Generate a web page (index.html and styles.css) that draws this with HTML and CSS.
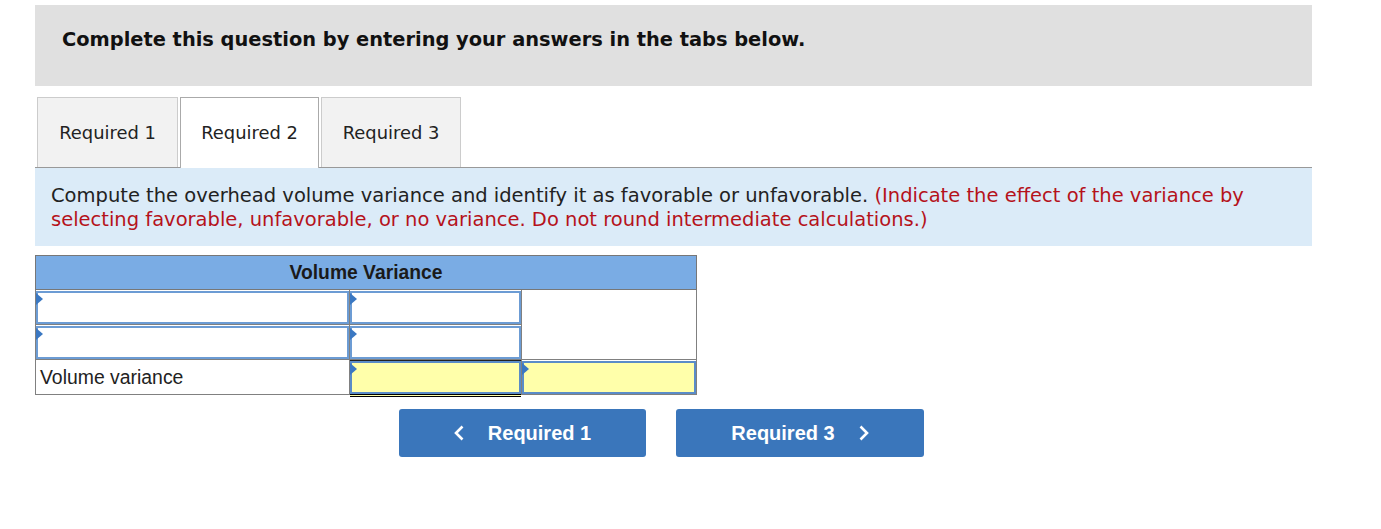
FILE: index.html
```html
<!DOCTYPE html>
<html>
<head>
<meta charset="utf-8">
<link rel="stylesheet" href="styles.css">
</head>
<body>
<div class="page">
  <div class="banner">Complete this question by entering your answers in the tabs below.</div>
  <div class="tabs">
    <div class="tab t1">Required 1</div>
    <div class="tab t2 active">Required 2</div>
    <div class="tab t3">Required 3</div>
  </div>
  <div class="instructions">
    Compute the overhead volume variance and identify it as favorable or unfavorable. <span class="red">(Indicate the effect of the variance by selecting favorable, unfavorable, or no variance. Do not round intermediate calculations.)</span>
  </div>
  <table class="grid">
    <colgroup><col class="c1"><col class="c2"><col class="c3"></colgroup>
    <tr class="hrow"><th colspan="3">Volume Variance</th></tr>
    <tr class="row">
      <td class="in"><div class="field"></div></td>
      <td class="in"><div class="field"></div></td>
      <td rowspan="2" class="blank"></td>
    </tr>
    <tr class="row">
      <td class="in"><div class="field"></div></td>
      <td class="in"><div class="field"></div></td>
    </tr>
    <tr class="row">
      <td class="label">Volume variance</td>
      <td class="in"><div class="field yellow total"></div></td>
      <td class="in"><div class="field yellow"></div></td>
    </tr>
  </table>
  <div class="nav">
    <button class="btn"><svg class="chev" viewBox="0 0 10 16" width="10" height="16"><path d="M8.5 1.5 L2 8 L8.5 14.5" fill="none" stroke="#fff" stroke-width="2.6"/></svg><span>Required 1</span></button>
    <button class="btn"><span>Required 3</span><svg class="chev" viewBox="0 0 10 16" width="10" height="16"><path d="M1.5 1.5 L8 8 L1.5 14.5" fill="none" stroke="#fff" stroke-width="2.6"/></svg></button>
  </div>
</div>
</body>
</html>
```
FILE: styles.css
```css
* { box-sizing: border-box; }
body { margin: 0; background: #fff; }
.page { padding: 5px 0 0 35px; width: 1312px; font-family: "DejaVu Sans", Verdana, sans-serif; }
.banner {
  background: #e0e0e0; height: 81px; padding: 23px 0 0 27px;
  font-weight: bold; font-size: 19.4px; color: #111;
}
.tabs {
  display: flex; gap: 2px; margin-top: 11px; padding-left: 2px;
  border-bottom: 1px solid #999; height: 71px; align-items: flex-start;
}
.tab {
  height: 70px; background: #f2f2f2; border: 1px solid #ccc; border-bottom: none;
  display: flex; align-items: center; justify-content: center; padding-bottom: 1px;
  font-size: 17.9px; color: #222;
}
.t1 { width: 141px; }
.t2 { width: 139px; }
.t3 { width: 140px; }
.tab.active { background: #fff; border-color: #aaa; height: 71px; padding-bottom: 2px; }
.instructions {
  background: #dbebf8; height: 78px; padding: 16px 16px 0 16px;
  font-size: 19.5px; line-height: 24px; color: #222;
}
.red { color: #b5121b; }
.grid {
  margin-top: 9px; border-collapse: collapse; width: 661px; table-layout: fixed;
  border: 1px solid #777; font-family: "Liberation Sans", Arial, sans-serif;
}
.c1 { width: 314px; } .c2 { width: 172px; } .c3 { width: 175px; }
.hrow { height: 34px; }
.row { height: 35px; }
.grid th {
  background: #7aace4; font-size: 19.3px; font-weight: bold; color: #1a1a1a;
  border: 1px solid #777; padding: 0;
}
.grid td { border: 1px solid #808080; padding: 0; }
.grid td.blank { background: #fff; }
.grid td.label { font-size: 19.4px; color: #222; padding: 0 0 0 4px; }
.field { position: relative; height: 33px; border: 2px solid #6c9cd4; background: #fff; }
.field.yellow { background: #ffffaa; border-color: #5a8cc8; }
.field.total { box-shadow: 0 -1px 0 #222, 0 1px 0 #000, 0 2px 0 #ffffaa, 0 3px 0 #000; }
.field::before {
  content: ""; position: absolute; left: -2px; top: 0;
  border-left: 7px solid #3b78c2; border-top: 6px solid transparent; border-bottom: 6px solid transparent;
}
.nav { display: flex; gap: 30px; margin: 14px 0 0 364px; }
.btn {
  width: 247px; height: 48px; background: #3a76bb; border: none; border-radius: 3px;
  color: #fff; font-family: "Liberation Sans", Arial, sans-serif; font-weight: bold; font-size: 20px;
  display: flex; align-items: center; justify-content: center; gap: 24px; padding: 0;
}
.btn + .btn { width: 248px; }
.chev { display: block; }
```
